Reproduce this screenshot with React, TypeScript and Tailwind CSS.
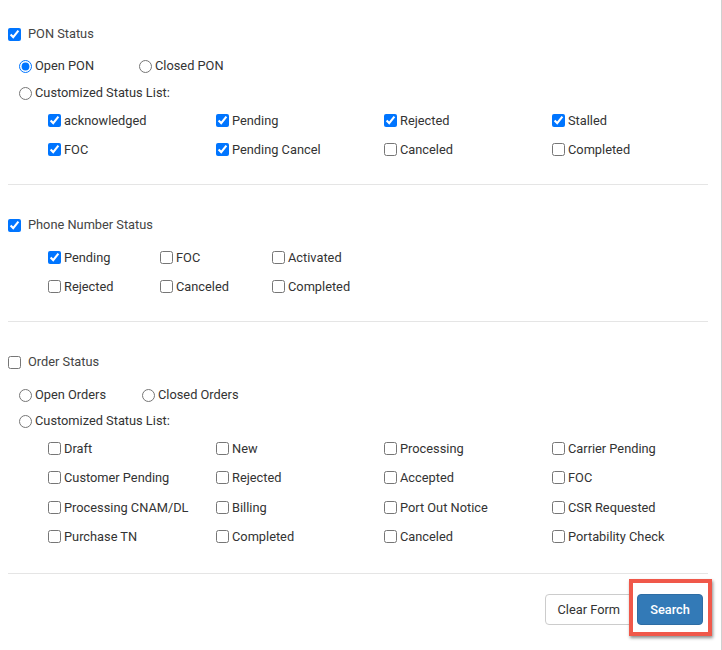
import { ReactNode } from "react"

type Item = { label: string; checked?: boolean }

const ponItems: Item[] = [
  { label: "acknowledged", checked: true },
  { label: "Pending", checked: true },
  { label: "Rejected", checked: true },
  { label: "Stalled", checked: true },
  { label: "FOC", checked: true },
  { label: "Pending Cancel", checked: true },
  { label: "Canceled" },
  { label: "Completed" },
]

const phoneItems: Item[] = [
  { label: "Pending", checked: true },
  { label: "FOC" },
  { label: "Activated" },
  { label: "Rejected" },
  { label: "Canceled" },
  { label: "Completed" },
]

const orderItems: Item[] = [
  { label: "Draft" },
  { label: "New" },
  { label: "Processing" },
  { label: "Carrier Pending" },
  { label: "Customer Pending" },
  { label: "Rejected" },
  { label: "Accepted" },
  { label: "FOC" },
  { label: "Processing CNAM/DL" },
  { label: "Billing" },
  { label: "Port Out Notice" },
  { label: "CSR Requested" },
  { label: "Purchase TN" },
  { label: "Completed" },
  { label: "Canceled" },
  { label: "Portability Check" },
]

function Check({ item }: { item: Item }) {
  return (
    <label className="flex items-center h-[29px] gap-[3px]">
      <input type="checkbox" defaultChecked={item.checked} className="m-0 w-[13px] h-[13px]" />
      <span>{item.label}</span>
    </label>
  )
}

function Radio({ label, checked, name, className }: { label: string; checked?: boolean; name: string; className?: string }) {
  return (
    <label className={"flex items-center h-5 gap-[3px] " + (className ?? "")}>
      <input type="radio" name={name} defaultChecked={checked} className="m-0 w-[13px] h-[13px]" />
      <span>{label}</span>
    </label>
  )
}

function Header({ label, checked, className }: { label: string; checked?: boolean; className?: string }) {
  return (
    <label className={"flex items-center h-5 gap-[7px] text-[#444] " + (className ?? "")}>
      <input type="checkbox" defaultChecked={checked} className="m-0 w-[13px] h-[13px]" />
      <span>{label}</span>
    </label>
  )
}

function Divider({ className }: { className?: string }) {
  return <div className={"border-t border-[#e5e5e5] " + (className ?? "")} />
}

function Grid({ items, cols }: { items: Item[]; cols: string }): ReactNode {
  return (
    <div className={"grid pl-[40px] " + cols}>
      {items.map((it, i) => (
        <Check key={i} item={it} />
      ))}
    </div>
  )
}

export default function App() {
  return (
    <div
      className="w-[722px] h-[650px] bg-white text-[12.8px] text-[#333] border-r border-[#d0d0d0] overflow-hidden"
      style={{ fontFamily: "Roboto, 'Liberation Sans', sans-serif" }}
    >
      <div className="pl-[8px] pr-[13px] pt-[24px]">
        {/* PON status */}
        <Header label="PON Status" checked />
        <div className="pl-[11px]">
          <div className="flex mt-[12px]">
            <Radio name="pon" label="Open PON" checked className="w-[120px]" />
            <Radio name="pon" label="Closed PON" />
          </div>
          <Radio name="pon" label="Customized Status List:" className="mt-[7px]" />
        </div>
        <div className="mt-[3px]">
          <Grid items={ponItems} cols="grid-cols-[168px_168px_168px_168px]" />
        </div>
        <Divider className="mt-[20px]" />

        {/* Phone number status */}
        <Header label="Phone Number Status" checked className="mt-[30px]" />
        <div className="mt-[8px]">
          <Grid items={phoneItems} cols="grid-cols-[112px_112px_112px]" />
        </div>
        <Divider className="mt-[20px]" />

        {/* Order status */}
        <Header label="Order Status" className="mt-[30px]" />
        <div className="pl-[11px]">
          <div className="flex mt-[13px]">
            <Radio name="order" label="Open Orders" className="w-[123px]" />
            <Radio name="order" label="Closed Orders" />
          </div>
          <Radio name="order" label="Customized Status List:" className="mt-[6px]" />
        </div>
        <div className="mt-[3px]">
          <Grid items={orderItems} cols="grid-cols-[168px_168px_168px_168px] auto-rows-[29.3px]" />
        </div>
        <Divider className="mt-[22px]" />

        <div className="flex justify-end gap-[4px] mt-[20px] pr-[5px]">
          <button className="h-[31px] px-[12px] bg-white border border-[#ccc] rounded-[4px] text-[#333]">
            Clear Form
          </button>
          <div className="relative">
            <button className="h-[31px] w-[66px] bg-[#337ab7] border border-[#2e6da4] rounded-[4px] text-white font-medium">
              Search
            </button>
            <div className="absolute -left-[8px] -top-[15px] -right-[9px] -bottom-[11px] border-[4px] border-[#f0584a] shadow-[1px_2px_3px_rgba(0,0,0,0.45)] pointer-events-none" />
          </div>
        </div>
      </div>
    </div>
  )
}
